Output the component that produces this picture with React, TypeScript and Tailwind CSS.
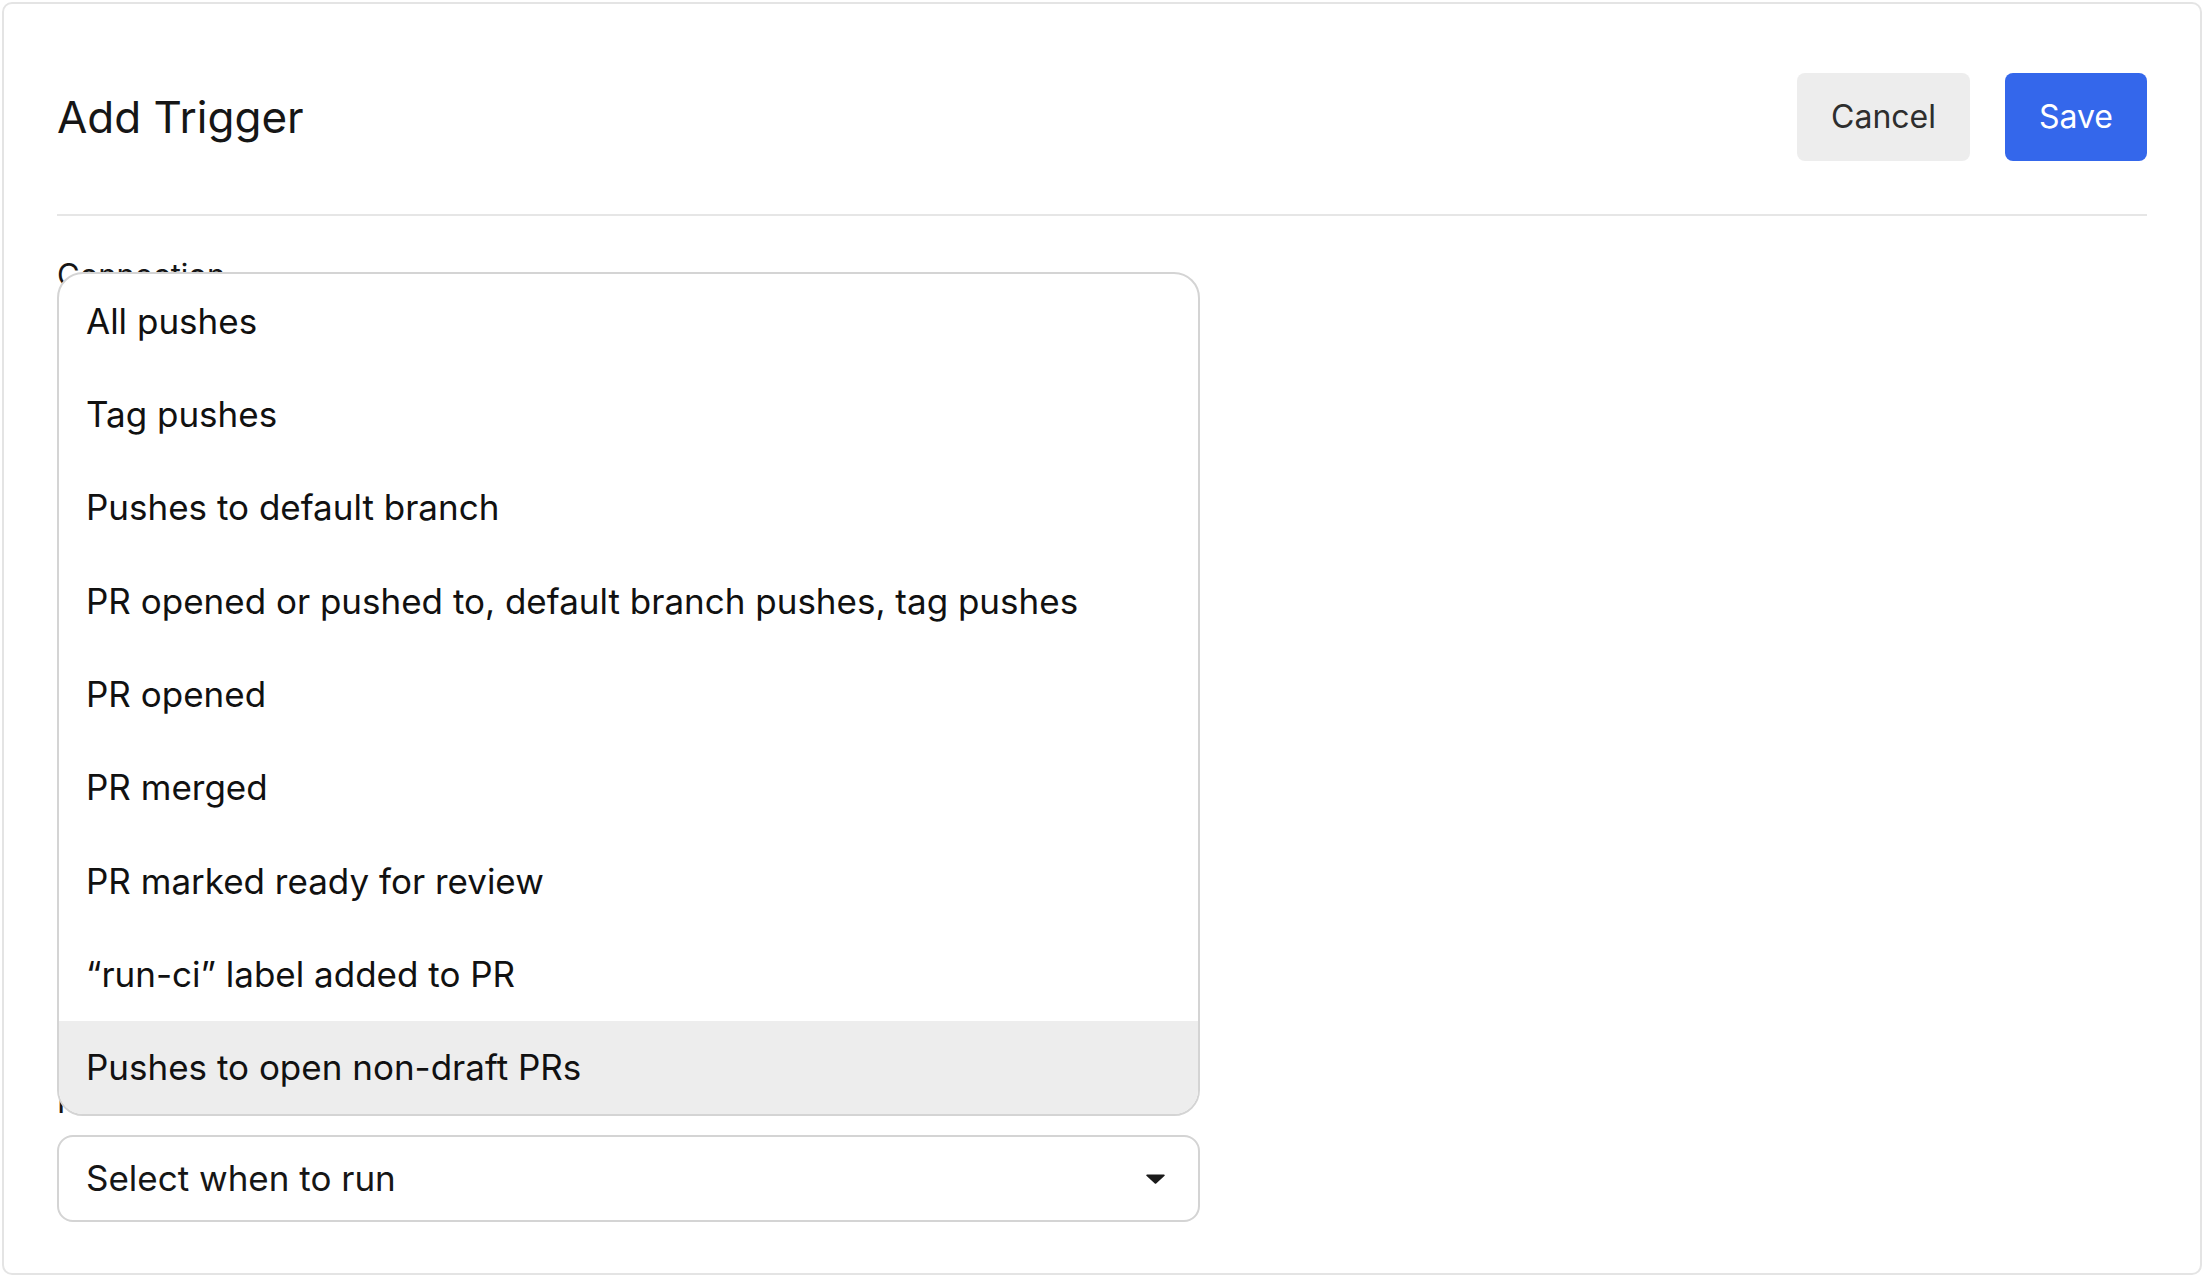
import React from "react";

const items = [
  "All pushes",
  "Tag pushes",
  "Pushes to default branch",
  "PR opened or pushed to, default branch pushes, tag pushes",
  "PR opened",
  "PR merged",
  "PR marked ready for review",
  "\u201crun-ci\u201d label added to PR",
  "Pushes to open non-draft PRs",
];

export default function App() {
  return (
    <div
      className="w-[2204px] h-[1276px] pt-[2px] px-[2px] pb-[1px] bg-white"
      style={{ fontFamily: "Inter, 'Noto Sans', sans-serif" }}
    >
      <div className="h-full border-2 border-[#e4e4e4] rounded-[10px] px-[53px] pt-[69px]">
        <div className="flex items-center justify-between h-[88px]">
          <h1 className="text-[44px] leading-[56px] font-normal text-[#161616]">Add Trigger</h1>
          <div className="flex items-center gap-[35px]">
            <button className="h-[88px] w-[173px] rounded-[8px] bg-[#ededed] text-[32px] text-[#2e2e2e]">
              Cancel
            </button>
            <button className="h-[88px] w-[142px] rounded-[8px] bg-[#3467eb] text-[32px] text-white">
              Save
            </button>
          </div>
        </div>
        <div className="mt-[53px] h-[2px] bg-[#e6e6e6]" />

        <div className="w-[1143px] mt-[39px]">
          <div className="text-[31px] leading-[40px] text-[#161616]">Connection</div>
          <div className="mt-[13px] h-[87px] border-2 border-[#d4d4d4] rounded-[16px]" />

          <div className="relative mt-[687px]">
            <div className="text-[31px] leading-[40px] text-[#161616]">Run when</div>
            <div className="relative mt-[13px]">
              <div className="absolute bottom-full left-0 w-full mb-[19px] border-2 border-[#d4d4d4] rounded-[26px] bg-white overflow-hidden z-10">
                {items.map((t, i) => (
                  <div
                    key={t}
                    className={
                      "h-[93.3px] flex items-center pl-[27px] text-[35px] text-[#111111] " +
                      (i === items.length - 1 ? "bg-[#ededed]" : "")
                    }
                  >
                    {t}
                  </div>
                ))}
              </div>
              <div className="h-[87px] border-2 border-[#d4d4d4] rounded-[16px] flex items-center justify-between pl-[27px] pr-[33px]">
                <span className="text-[35px] text-[#161616]">Select when to run</span>
                <svg width="19" height="10" viewBox="0 0 19 10">
                  <path d="M1 0.5 H18 a0.8 0.8 0 0 1 0.6 1.3 L10.2 9.4 a1 1 0 0 1 -1.4 0 L0.4 1.8 A0.8 0.8 0 0 1 1 0.5 Z" fill="#1a1a1a" />
                </svg>
              </div>
            </div>
          </div>
        </div>
      </div>
    </div>
  );
}
